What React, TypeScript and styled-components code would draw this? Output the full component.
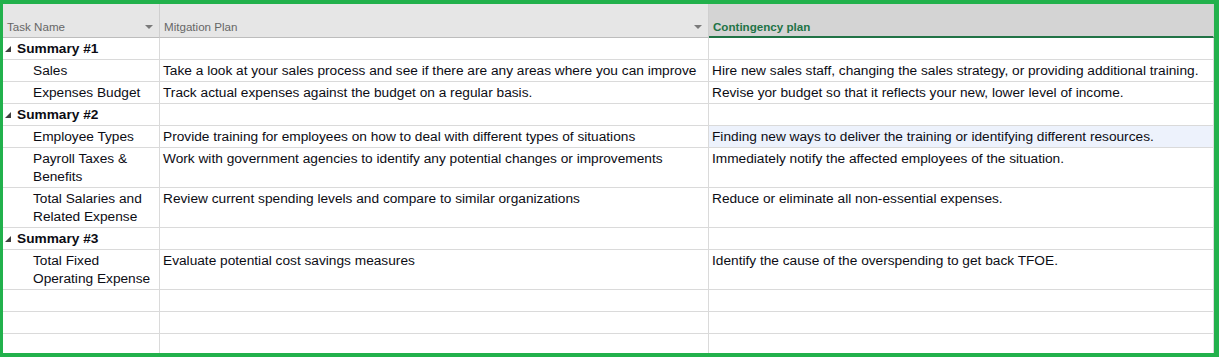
import React from "react";
import styled, { createGlobalStyle } from "styled-components";

type Row = {
  name: string;
  summary?: boolean;
  mitigation?: string;
  contingency?: string;
  selected?: boolean;
};

const rows: Row[] = [
  { name: "Summary #1", summary: true },
  {
    name: "Sales",
    mitigation:
      "Take a look at your sales process and see if there are any areas where you can improve",
    contingency:
      "Hire new sales staff, changing the sales strategy, or providing additional training.",
  },
  {
    name: "Expenses Budget",
    mitigation: "Track actual expenses against the budget on a regular basis.",
    contingency: "Revise yor budget so that it reflects your new, lower level of income.",
  },
  { name: "Summary #2", summary: true },
  {
    name: "Employee Types",
    mitigation:
      "Provide training for employees on how to deal with different types of situations",
    contingency:
      "Finding new ways to deliver the training or identifying different resources.",
    selected: true,
  },
  {
    name: "Payroll Taxes & Benefits",
    mitigation:
      "Work with government agencies to identify any potential changes or improvements",
    contingency: "Immediately notify the affected employees of the situation.",
  },
  {
    name: "Total Salaries and Related Expense",
    mitigation: "Review current spending levels and compare to similar organizations",
    contingency: "Reduce or eliminate all non-essential expenses.",
  },
  { name: "Summary #3", summary: true },
  {
    name: "Total Fixed Operating Expense",
    mitigation: "Evaluate potential cost savings measures",
    contingency: "Identify the cause of the overspending to get back TFOE.",
  },
  { name: "" },
  { name: "" },
  { name: "" },
];

const GlobalStyle = createGlobalStyle`
  html, body {
    margin: 0;
    padding: 0;
    background: #ffffff;
  }
  body {
    font-family: "Liberation Sans", Arial, sans-serif;
  }
`;

const Frame = styled.div`
  box-sizing: border-box;
  width: 1219px;
  height: 357px;
  border-style: solid;
  border-color: #22b14c;
  border-width: 4px 5px 4px 3px;
  overflow: hidden;
  background: #ffffff;
`;

const Sheet = styled.div`
  display: grid;
  grid-template-columns: 157px 549px 1fr;
  grid-auto-rows: auto;
`;

const HeadCell = styled.div<{ $active?: boolean }>`
  box-sizing: border-box;
  height: 34px;
  display: flex;
  align-items: flex-end;
  justify-content: space-between;
  padding: 0 6px 3px 4px;
  background: ${(p) => (p.$active ? "#d4d4d4" : "#e6e6e6")};
  border-right: 1px solid #cfcfcf;
  border-bottom: ${(p) => (p.$active ? "2px solid #217346" : "1px solid #bdbdbd")};
  padding-bottom: ${(p) => (p.$active ? "2px" : "3px")};
  color: ${(p) => (p.$active ? "#217346" : "#666666")};
  font-size: ${(p) => (p.$active ? "11.6px" : "11.6px")};
  font-weight: ${(p) => (p.$active ? 700 : 400)};
  line-height: 14px;

  svg {
    margin-bottom: 4px;
  }
`;

const Cell = styled.div<{ $selected?: boolean; $indent?: number }>`
  box-sizing: border-box;
  display: flex;
  align-items: flex-start;
  min-height: 22px;
  padding: 2px 4px 1px ${(p) => p.$indent ?? 3}px;
  border-right: 1px solid #dadada;
  border-bottom: 1px solid #dadada;
  background: ${(p) => (p.$selected ? "#edf2fc" : "#ffffff")};
  color: #0c0c14;
  font-size: 13.7px;
  line-height: 18px;
  white-space: pre-wrap;
`;

const NameText = styled.span<{ $bold?: boolean }>`
  font-weight: ${(p) => (p.$bold ? 700 : 400)};
`;

const Toggle = styled.span`
  display: inline-flex;
  width: 12px;
  height: 18px;
  align-items: center;
  flex-shrink: 0;
`;

const FilterArrow = () => (
  <svg width="8" height="5" viewBox="0 0 8 5">
    <polygon points="0,0 8,0 4,4" fill="#7a7a7a" />
  </svg>
);

const Collapse = () => (
  <Toggle>
    <svg width="6" height="6" viewBox="0 0 6 6">
      <polygon points="6,0 6,6 0,6" fill="#404040" />
    </svg>
  </Toggle>
);

const App = () => {
  return (
    <>
      <GlobalStyle />
      <Frame>
        <Sheet>
          <HeadCell>
            <span>Task Name</span>
            <FilterArrow />
          </HeadCell>
          <HeadCell>
            <span>Mitgation Plan</span>
            <FilterArrow />
          </HeadCell>
          <HeadCell $active>
            <span>Contingency plan</span>
          </HeadCell>
          {rows.map((row, i) => (
            <React.Fragment key={i}>
              <Cell $indent={row.summary ? 2 : 30}>
                {row.summary && <Collapse />}
                <NameText $bold={row.summary}>{row.name}</NameText>
              </Cell>
              <Cell>{row.mitigation ?? ""}</Cell>
              <Cell $selected={row.selected}>{row.contingency ?? ""}</Cell>
            </React.Fragment>
          ))}
        </Sheet>
      </Frame>
    </>
  );
};

export default App;
